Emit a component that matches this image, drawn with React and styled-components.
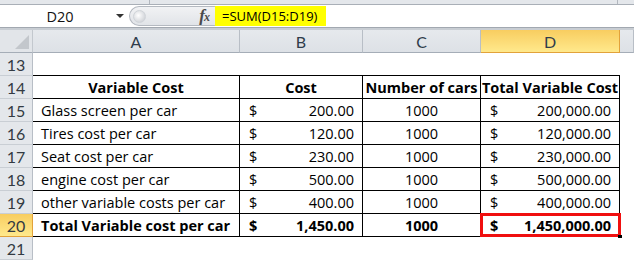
import React from "react";
import styled, { createGlobalStyle, css } from "styled-components";

const GlobalStyle = createGlobalStyle`
  html, body {
    margin: 0;
    padding: 0;
    background: #ffffff;
  }
  body {
    width: 634px;
    height: 260px;
    overflow: hidden;
    font-family: "Open Sans", Lato, sans-serif;
  }
`;

const COLS = "33px 207px 123px 118px 139px 14px";

const Window = styled.div`
  width: 634px;
  height: 260px;
  display: flex;
  flex-direction: column;
  overflow: hidden;
`;

const TopStrip = styled.div`
  height: 4px;
  display: grid;
  grid-template-columns: 150px 468px 1fr;
  background: #e4e7eb;
  border-bottom: 1px solid #a9afb7;
`;

const Tick = styled.div`
  border-right: 1px solid #b2b7be;
`;

const FormulaBar = styled.div`
  height: 22px;
  display: flex;
  background: #ffffff;
`;

const NameBox = styled.div`
  width: 129px;
  display: flex;
  align-items: center;
  font-size: 14.5px;
  color: #111;
`;

const NameText = styled.span`
  flex: 1;
  text-align: center;
  padding-left: 4px;
`;

const DropArrow = styled.span`
  width: 0;
  height: 0;
  margin-right: 5px;
  border-left: 4px solid transparent;
  border-right: 4px solid transparent;
  border-top: 4px solid #333;
`;

const Grip = styled.div`
  width: 86px;
  margin: 1px 0;
  display: flex;
  align-items: center;
  justify-content: space-between;
  padding: 0 6px 0 3px;
  box-sizing: border-box;
  background: linear-gradient(#f1f2f4, #e1e4e8);
  border: 1px solid #b4b9c0;
  border-right: none;
  border-radius: 11px 0 0 11px;
`;

const Knob = styled.span`
  width: 11px;
  height: 11px;
  border-radius: 50%;
  background: radial-gradient(circle at 40% 40%, #ffffff, #c3c7cd);
  border: 1px solid #d0d4d9;
`;

const Fx = styled.span`
  font-family: "Liberation Serif", serif;
  font-style: italic;
  font-weight: bold;
  font-size: 17px;
  color: #4a4a4a;
  letter-spacing: -1px;

  & > small {
    font-size: 12px;
  }
`;

const FormulaInput = styled.div`
  flex: 1;
  display: flex;
  margin: 1px 0;
  font-size: 13px;
  color: #000;
`;

const Highlight = styled.span`
  display: flex;
  align-items: center;
  background: #ffff00;
  padding: 0 9px 0 7px;
`;

const BarDivider = styled.div`
  height: 2px;
  background: #c8cdd3;
  border-top: 1px solid #a2a8b0;
`;

const Row = styled.div`
  display: grid;
  grid-template-columns: ${COLS};
  height: 23px;
`;

const activeHead = css`
  background: linear-gradient(#f8cd60, #ffe98c);
  border-color: #e2a23a;
`;

const Corner = styled.div`
  position: relative;
  background: #e2e5e9;
  border-right: 1px solid #c3c8ce;
  border-bottom: 1px solid #a5adb7;

  &::after {
    content: "";
    position: absolute;
    right: 3px;
    bottom: 3px;
    border-left: 14px solid transparent;
    border-bottom: 14px solid #c3c7cc;
  }
`;

const ColHead = styled.div`
  display: flex;
  align-items: center;
  justify-content: center;
  font-family: Lato, sans-serif;
  font-size: 16px;
  color: #2f3c4b;
  background: linear-gradient(#e6e9ed, #dde1e6);
  border-right: 1px solid #b8bec6;
  border-bottom: 1px solid #a5adb7;
  ${(p) => p.$active && activeHead}
`;

const RowHead = styled.div`
  display: flex;
  align-items: center;
  justify-content: center;
  font-family: Lato, sans-serif;
  font-size: 16px;
  color: #333a42;
  background: #e4e7eb;
  border-right: 1px solid #b8bec6;
  border-bottom: 1px solid #c9ced4;
  ${(p) => p.$active && activeHead}
`;

const Cell = styled.div`
  position: relative;
  display: flex;
  align-items: center;
  justify-content: ${(p) => p.$align || "flex-start"};
  padding: 0 8px;
  font-size: 14.5px;
  font-weight: ${(p) => (p.$bold ? 700 : 400)};
  color: #000;
  white-space: nowrap;
  ${(p) =>
    p.$boxed &&
    css`
      border-right: 1px solid #000;
      border-bottom: 1px solid #000;
    `}
  ${(p) =>
    p.$topEdge &&
    css`
      border-bottom: 1px solid #000;
    `}
`;

const Money = styled(Cell)`
  justify-content: space-between;
  padding: 0 8px 0 9px;
`;

const Selection = styled.div`
  position: absolute;
  top: -1px;
  left: -1px;
  right: -2px;
  bottom: -1px;
  border: 3px solid #f00f0f;

  &::after {
    content: "";
    position: absolute;
    right: -4px;
    bottom: -4px;
    width: 4px;
    height: 3px;
    background: #000;
  }
`;

const lines = [
  { n: 15, a: "Glass screen per car", b: "200.00", d: "200,000.00" },
  { n: 16, a: "Tires cost per car", b: "120.00", d: "120,000.00" },
  { n: 17, a: "Seat cost per car", b: "230.00", d: "230,000.00" },
  { n: 18, a: "engine cost per car", b: "500.00", d: "500,000.00" },
  { n: 19, a: "other variable costs per car", b: "400.00", d: "400,000.00" },
  { n: 20, a: "Total Variable cost per car", b: "1,450.00", d: "1,450,000.00", total: true },
];

const App = () => {
  return (
    <Window>
      <GlobalStyle />
      <TopStrip>
        <Tick />
        <Tick />
        <div />
      </TopStrip>
      <FormulaBar>
        <NameBox>
          <NameText>D20</NameText>
          <DropArrow />
        </NameBox>
        <Grip>
          <Knob />
          <Fx>
            f<small>x</small>
          </Fx>
        </Grip>
        <FormulaInput>
          <Highlight>=SUM(D15:D19)</Highlight>
        </FormulaInput>
      </FormulaBar>
      <BarDivider />

      <Row>
        <Corner />
        <ColHead>A</ColHead>
        <ColHead>B</ColHead>
        <ColHead>C</ColHead>
        <ColHead $active>D</ColHead>
        <ColHead />
      </Row>

      <Row>
        <RowHead>13</RowHead>
        <Cell $topEdge />
        <Cell $topEdge />
        <Cell $topEdge />
        <Cell $topEdge />
        <Cell />
      </Row>

      <Row>
        <RowHead>14</RowHead>
        <Cell $boxed $bold $align="center">Variable Cost</Cell>
        <Cell $boxed $bold $align="center">Cost</Cell>
        <Cell $boxed $bold $align="center">Number of cars</Cell>
        <Cell $boxed $bold $align="center">Total Variable Cost</Cell>
        <Cell />
      </Row>

      {lines.map((line) => (
        <Row key={line.n}>
          <RowHead $active={line.total}>{line.n}</RowHead>
          <Cell $boxed $bold={line.total}>{line.a}</Cell>
          <Money $boxed $bold={line.total}>
            <span>$</span>
            <span>{line.b}</span>
          </Money>
          <Cell $boxed $bold={line.total} $align="center">1000</Cell>
          <Money $boxed $bold={line.total}>
            <span>$</span>
            <span>{line.d}</span>
            {line.total && <Selection />}
          </Money>
          <Cell />
        </Row>
      ))}

      <Row>
        <RowHead>21</RowHead>
        <Cell />
        <Cell />
        <Cell />
        <Cell />
        <Cell />
      </Row>
    </Window>
  );
};

export default App;
